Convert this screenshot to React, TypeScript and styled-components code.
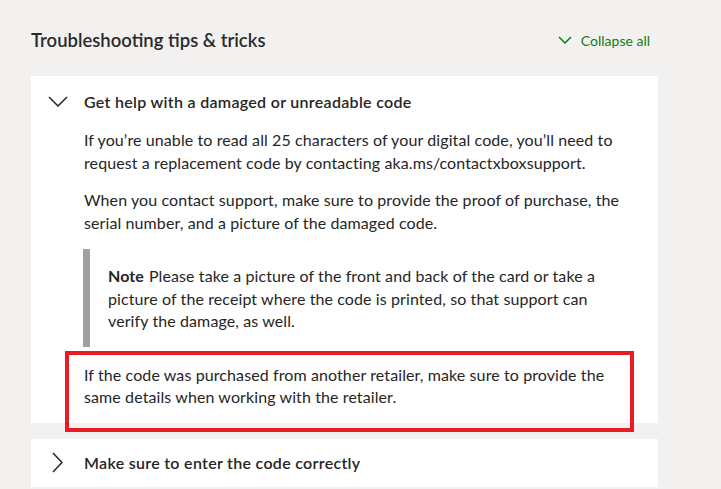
import React from 'react'
import styled, { createGlobalStyle } from 'styled-components'

const GlobalStyle = createGlobalStyle`
  html, body {
    margin: 0;
    padding: 0;
    background: #f2f1f0;
  }
  body {
    font-family: Lato, "Liberation Sans", sans-serif;
    color: #262626;
  }
`

const Page = styled.div`
  padding: 26px 0 0 31px;
  width: 627px;
`

const TitleRow = styled.div`
  display: flex;
  align-items: center;
  justify-content: space-between;
  height: 28px;
  margin-bottom: 22px;
  padding-right: 8px;
`

const Title = styled.h2`
  margin: 0;
  font-size: 18.5px;
  font-weight: 600;
  line-height: 28px;
  color: #2b2b2b;
`

const CollapseAll = styled.button`
  display: flex;
  align-items: center;
  gap: 9px;
  border: none;
  background: none;
  padding: 0;
  font-family: inherit;
  font-size: 14px;
  color: #107c10;
  cursor: pointer;
`

const Card = styled.section`
  background: #fff;
  margin-bottom: 16px;
`

const CardHeader = styled.div<{ $height: number }>`
  display: flex;
  align-items: center;
  height: ${({ $height }) => $height}px;
  padding-left: 16px;
`

const ChevronSlot = styled.span`
  display: flex;
  align-items: center;
  justify-content: center;
  width: 21px;
  margin-right: 16px;
`

const CardTitle = styled.h3`
  margin: 0;
  font-size: 16px;
  font-weight: 600;
  letter-spacing: 0.3px;
  color: #262626;
`

const CardBody = styled.div`
  padding: 3px 28px 14px 53px;
`

const Paragraph = styled.p`
  margin: 0 0 15px;
  font-size: 16px;
  line-height: 22.5px;
  letter-spacing: 0.1px;
`

const Note = styled.div`
  border-left: 7px solid #a0a0a0;
  margin: 0 0 0 -1px;
  padding: 16px 10px 14px 18px;
  font-size: 16px;
  line-height: 22.5px;
  letter-spacing: 0.1px;
`

const NoteLabel = styled.strong`
  display: inline-block;
  font-weight: 700;
  margin-right: 5px;
`

const Highlighted = styled(Paragraph)`
  position: relative;
  margin: 17px 0 0;

  &::after {
    content: '';
    position: absolute;
    top: -13px;
    bottom: -23px;
    left: -19px;
    right: -4px;
    border: 4px solid #e81c24;
    pointer-events: none;
  }
`

const ChevronDown = ({ w, h, color }: { w: number; h: number; color: string }) => (
  <svg width={w} height={h} viewBox={`0 0 ${w} ${h}`} fill="none">
    <path d={`M1 1 L${w / 2} ${h - 1} L${w - 1} 1`} stroke={color} strokeWidth="1.5" />
  </svg>
)

const ChevronRight = () => (
  <svg width="11" height="21" viewBox="0 0 11 21" fill="none">
    <path d="M1 1 L10 10.5 L1 20" stroke="#262626" strokeWidth="1.5" />
  </svg>
)

export default function App() {
  return (
    <>
      <GlobalStyle />
      <Page>
        <TitleRow>
          <Title>Troubleshooting tips &amp; tricks</Title>
          <CollapseAll>
            <ChevronDown w={14} h={8} color="#107c10" />
            Collapse all
          </CollapseAll>
        </TitleRow>

        <Card>
          <CardHeader $height={50}>
            <ChevronSlot>
              <ChevronDown w={20} h={11} color="#262626" />
            </ChevronSlot>
            <CardTitle>Get help with a damaged or unreadable code</CardTitle>
          </CardHeader>
          <CardBody>
            <Paragraph>
              If you’re unable to read all 25 characters of your digital code, you’ll need to request
              a replacement code by contacting aka.ms/contactxboxsupport.
            </Paragraph>
            <Paragraph>
              When you contact support, make sure to provide the proof of purchase, the serial number,
              and a picture of the damaged code.
            </Paragraph>
            <Note>
              <NoteLabel>Note</NoteLabel>Please take a picture of the front and back of the card or
              take a picture of the receipt where the code is printed, so that support can verify the
              damage, as well.
            </Note>
            <Highlighted>
              If the code was purchased from another retailer, make sure to provide the same details
              when working with the retailer.
            </Highlighted>
          </CardBody>
        </Card>

        <Card>
          <CardHeader $height={48}>
            <ChevronSlot>
              <ChevronRight />
            </ChevronSlot>
            <CardTitle>Make sure to enter the code correctly</CardTitle>
          </CardHeader>
        </Card>
      </Page>
    </>
  )
}
